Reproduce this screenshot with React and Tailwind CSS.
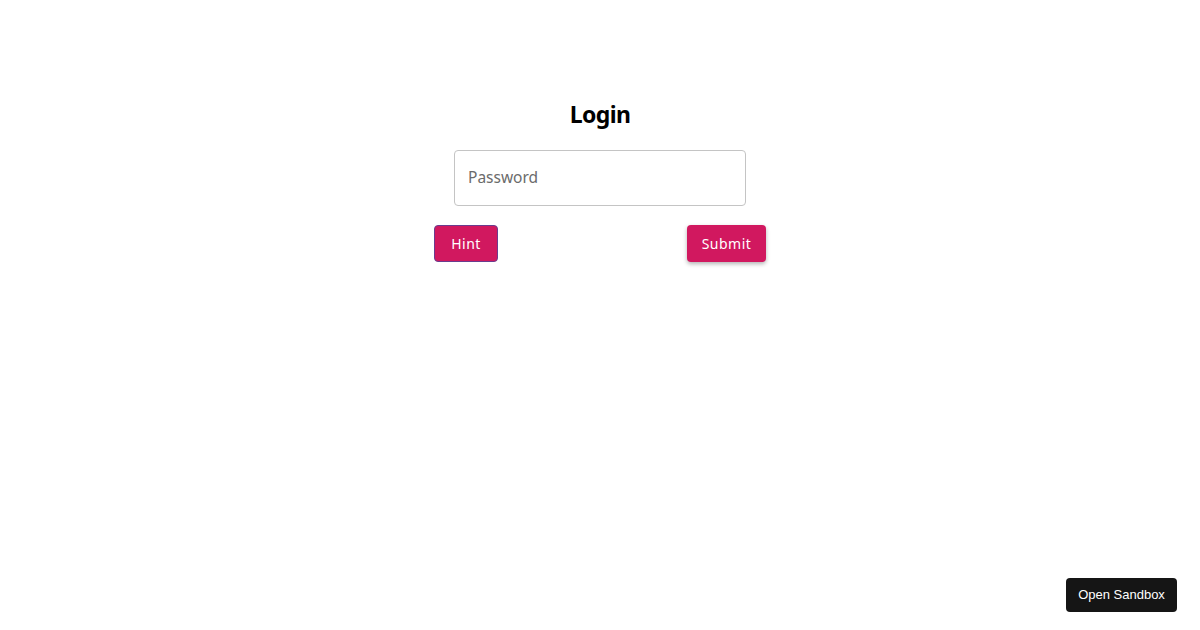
export default function App() {
  return (
    <div className="relative w-[1200px] h-[630px] bg-white" style={{ fontFamily: '"Noto Sans", "Open Sans", sans-serif' }}>
      <div className="flex flex-col items-center pt-[98px]">
        <h1 className="text-[23px] leading-[32px] font-bold text-black tracking-[-0.6px]">Login</h1>
        <div className="mt-[20px] w-[292px] h-[56px] rounded-[4px] border border-[#c4c4c4] flex items-center px-[13px]">
          <span className="text-[15.5px] text-[#6b6b6b]">Password</span>
        </div>
        <div className="mt-[19px] w-[332px] flex justify-between">
          <button className="w-[64px] h-[37px] rounded-[4px] bg-[#d1185f] border border-[#6a3c8e] text-white text-[14px] tracking-[0.5px]">Hint</button>
          <button className="w-[79px] h-[37px] rounded-[4px] bg-[#d1185f] text-white text-[14px] tracking-[0.5px] shadow-[0_2px_4px_rgba(0,0,0,0.3)]">Submit</button>
        </div>
      </div>
      <div className="absolute left-[1066px] top-[578px] w-[111px] h-[34px] rounded-[4px] bg-[#151515] flex items-center justify-center text-white text-[13px]" style={{ fontFamily: '"Liberation Sans", Arial, sans-serif' }}>
        Open Sandbox
      </div>
    </div>
  );
}
